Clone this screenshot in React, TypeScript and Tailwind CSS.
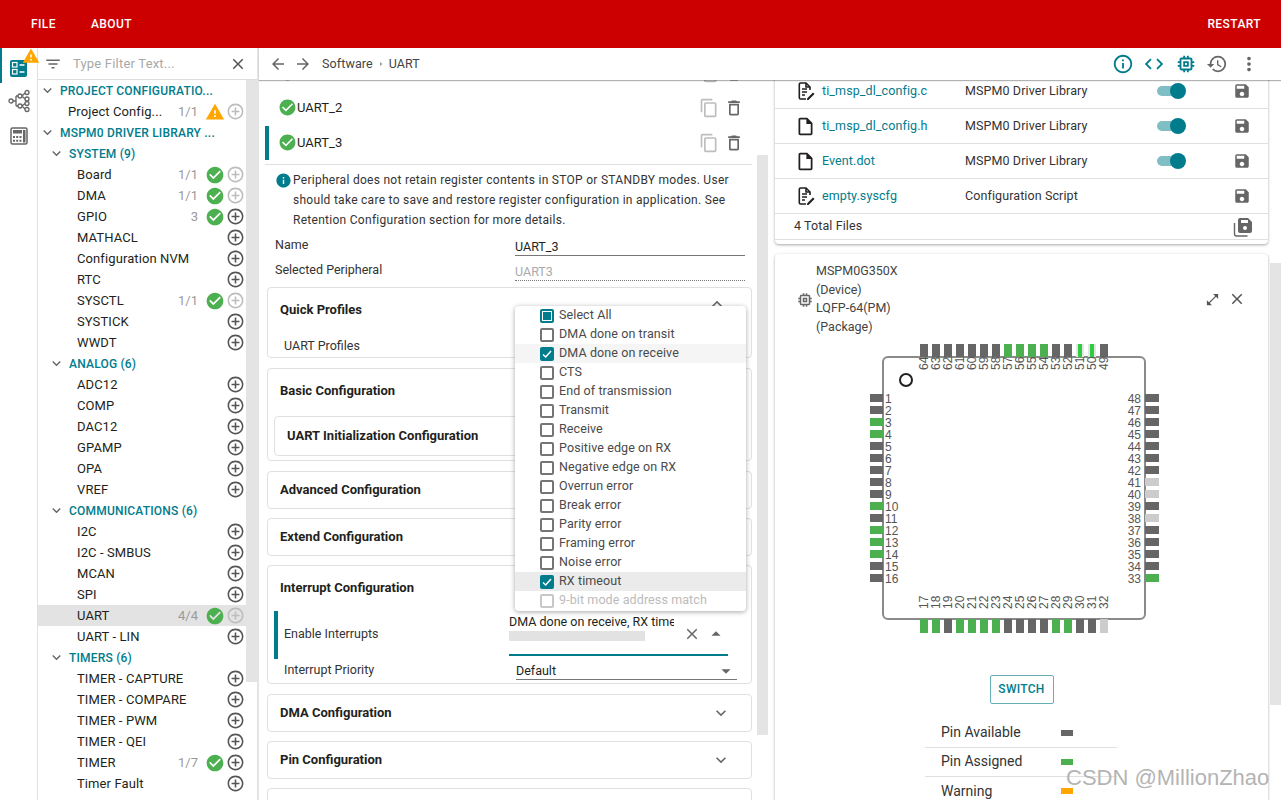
import {
  MdAddCircleOutline,
  MdArrowBack,
  MdArrowForward,
  MdArrowDropDown,
  MdArrowDropUp,
  MdCheckCircle,
  MdClose,
  MdCode,
  MdContentCopy,
  MdDeleteOutline,
  MdExpandLess,
  MdExpandMore,
  MdFilterList,
  MdHistory,
  MdInfo,
  MdInfoOutline,
  MdMemory,
  MdMoreVert,
  MdOpenInFull,
  MdOutlineInsertDriveFile,
  MdSave,
  MdWarning,
} from 'react-icons/md';

const font = { fontFamily: 'Roboto, sans-serif' };

type TreeRow =
  | { kind: 'root'; label: string }
  | { kind: 'group'; label: string }
  | { kind: 'item'; label: string; count?: string; status?: 'ok' | 'warn'; addOff?: boolean; indent?: boolean };

const treeRows: TreeRow[] = [
  { kind: 'root', label: 'PROJECT CONFIGURATIO...' },
  { kind: 'item', label: 'Project Config...', count: '1/1', status: 'warn', addOff: true, indent: true },
  { kind: 'root', label: 'MSPM0 DRIVER LIBRARY ...' },
  { kind: 'group', label: 'SYSTEM (9)' },
  { kind: 'item', label: 'Board', count: '1/1', status: 'ok', addOff: true },
  { kind: 'item', label: 'DMA', count: '1/1', status: 'ok', addOff: true },
  { kind: 'item', label: 'GPIO', count: '3', status: 'ok' },
  { kind: 'item', label: 'MATHACL' },
  { kind: 'item', label: 'Configuration NVM' },
  { kind: 'item', label: 'RTC' },
  { kind: 'item', label: 'SYSCTL', count: '1/1', status: 'ok', addOff: true },
  { kind: 'item', label: 'SYSTICK' },
  { kind: 'item', label: 'WWDT' },
  { kind: 'group', label: 'ANALOG (6)' },
  { kind: 'item', label: 'ADC12' },
  { kind: 'item', label: 'COMP' },
  { kind: 'item', label: 'DAC12' },
  { kind: 'item', label: 'GPAMP' },
  { kind: 'item', label: 'OPA' },
  { kind: 'item', label: 'VREF' },
  { kind: 'group', label: 'COMMUNICATIONS (6)' },
  { kind: 'item', label: 'I2C' },
  { kind: 'item', label: 'I2C - SMBUS' },
  { kind: 'item', label: 'MCAN' },
  { kind: 'item', label: 'SPI' },
  { kind: 'item', label: 'UART', count: '4/4', status: 'ok', addOff: true },
  { kind: 'item', label: 'UART - LIN' },
  { kind: 'group', label: 'TIMERS (6)' },
  { kind: 'item', label: 'TIMER - CAPTURE' },
  { kind: 'item', label: 'TIMER - COMPARE' },
  { kind: 'item', label: 'TIMER - PWM' },
  { kind: 'item', label: 'TIMER - QEI' },
  { kind: 'item', label: 'TIMER', count: '1/7', status: 'ok' },
  { kind: 'item', label: 'Timer Fault' },
];

const interruptOptions = [
  { label: 'Select All', state: 'partial' },
  { label: 'DMA done on transit' },
  { label: 'DMA done on receive', state: 'checked', bg: 'bg-[#f5f5f5]' },
  { label: 'CTS' },
  { label: 'End of transmission' },
  { label: 'Transmit' },
  { label: 'Receive' },
  { label: 'Positive edge on RX' },
  { label: 'Negative edge on RX' },
  { label: 'Overrun error' },
  { label: 'Break error' },
  { label: 'Parity error' },
  { label: 'Framing error' },
  { label: 'Noise error' },
  { label: 'RX timeout', state: 'checked', bg: 'bg-[#ebebeb]' },
  { label: '9-bit mode address match', state: 'disabled' },
];

const files = [
  { name: 'ti_msp_dl_config.c', lib: 'MSPM0 Driver Library', edit: true, toggle: true },
  { name: 'ti_msp_dl_config.h', lib: 'MSPM0 Driver Library', edit: false, toggle: true },
  { name: 'Event.dot', lib: 'MSPM0 Driver Library', edit: false, toggle: true },
  { name: 'empty.syscfg', lib: 'Configuration Script', edit: true, toggle: false },
];

function EditFileIcon() {
  return (
    <svg width="20" height="20" viewBox="0 0 20 20" fill="none" stroke="#231f20" strokeWidth="1.6">
      <path d="M14 9V6l-4-4H4.5A1.2 1.2 0 0 0 3.3 3.2v13.6A1.2 1.2 0 0 0 4.5 18H10" />
      <path d="M10 2v4h4" />
      <path d="M6 8h5M6 11h5M6 14h3" strokeWidth="1.3" />
      <path d="M11 17.5l6-6 1.5 1.5-6 6h-1.5z" fill="#231f20" stroke="none" />
    </svg>
  );
}

function RailListIcon() {
  return (
    <svg width="20" height="20" viewBox="0 0 20 20">
      <rect x="1" y="2" width="17" height="17" rx="2" fill="#007c8c" />
      <rect x="3.5" y="4.5" width="4.5" height="4.5" fill="none" stroke="#fff" strokeWidth="1.2" />
      <rect x="3.5" y="11.5" width="4.5" height="4.5" fill="none" stroke="#fff" strokeWidth="1.2" />
      <path d="M10.5 7h5M10.5 14h5" stroke="#fff" strokeWidth="1.4" />
    </svg>
  );
}

function RailTreeIcon() {
  return (
    <svg width="22" height="24" viewBox="0 0 22 24" fill="none" stroke="#666" strokeWidth="1.3">
      <circle cx="3" cy="12" r="2" />
      <circle cx="12" cy="7" r="2" />
      <circle cx="12" cy="17" r="2" />
      <circle cx="19" cy="3.5" r="2" />
      <circle cx="19" cy="10" r="2" />
      <circle cx="19" cy="14.5" r="2" />
      <circle cx="19" cy="20.5" r="2" />
      <path d="M5 12h3M8 7v10M8 7h2M8 17h2M14 7l3-3M14 7l3 3M14 17l3-2.5M14 17l3 3" />
    </svg>
  );
}

function RailCalcIcon() {
  return (
    <svg width="18" height="18" viewBox="0 0 18 18">
      <rect x="1" y="1" width="16" height="16" rx="1.5" fill="none" stroke="#666" strokeWidth="1.5" />
      <rect x="3" y="3" width="9" height="3.5" fill="#666" />
      <rect x="13" y="3" width="2.5" height="12.5" fill="#666" />
      <path d="M3 9h2v2H3zM6.2 9h2v2h-2zM9.5 9h2v2h-2zM3 12.7h2v2H3zM6.2 12.7h2v2h-2zM9.5 12.7h2v2h-2z" fill="#666" />
    </svg>
  );
}

function SaveStackIcon() {
  return (
    <svg width="20" height="20" viewBox="0 0 20 20" fill="#666">
      <path d="M7 1h8l4 4v9a2 2 0 0 1-2 2H7a2 2 0 0 1-2-2V3a2 2 0 0 1 2-2zm1 2v3h7V3H8zm4 6a2 2 0 1 0 0 4 2 2 0 0 0 0-4z" fill-rule="evenodd" />
      <path d="M1.500 6v11a2 2 0 0 0 2 2h11" fill="none" stroke="#666" strokeWidth="1.4" />
    </svg>
  );
}

function TreeList() {
  return (
    <div className="flex flex-col text-[13px]">
      {treeRows.map((row, i) => {
        if (row.kind === 'root' || row.kind === 'group') {
          return (
            <div
              key={i}
              className={`flex h-[21px] items-center font-medium text-[12px] tracking-[0.2px] text-[#007c8c] whitespace-nowrap ${row.kind === 'root' ? 'pl-[1px]' : 'pl-[10px]'}`}
            >
              <MdExpandMore size={17} className="mr-[1px] text-[#666] shrink-0" />
              <span className="ml-[3px]">{row.label}</span>
            </div>
          );
        }
        const selected = row.label === 'UART';
        return (
          <div
            key={i}
            className={`flex h-[21px] items-center pr-[12px] ${row.indent ? 'pl-[30px]' : 'pl-[39px]'} ${selected ? 'bg-[#e3e3e3]' : ''}`}
          >
            <span className="flex-1 text-[#231f20] whitespace-nowrap tracking-[0.1px]">{row.label}</span>
            {row.count && <span className="text-[#9a9a9a] mr-[7px]">{row.count}</span>}
            {row.status === 'ok' && <MdCheckCircle size={20} className="text-[#4caf50] mr-[1px]" />}
            {row.status === 'warn' && <MdWarning size={20} className="text-[#ffa600] mr-[1px]" />}
            <MdAddCircleOutline size={19} className={row.addOff ? 'text-[#bdbdbd]' : 'text-[#555]'} />
          </div>
        );
      })}
    </div>
  );
}

function Accordion({ title, className = '' }: { title: string; className?: string }) {
  return (
    <div className={`h-[38px] rounded border border-[#e0e0e0] flex items-center justify-between pl-[12px] pr-[20px] ${className}`}>
      <span className="text-[13px] font-bold text-[#231f20]">{title}</span>
      <MdExpandMore size={20} className="text-[#666]" />
    </div>
  );
}

function ConfigRow({ name, active }: { name: string; active?: boolean }) {
  return (
    <div className="h-[35px] flex items-center pl-[6px] pr-[26px] relative">
      <div className={`w-[4px] h-[34px] ${active ? 'bg-[#007c8c]' : ''}`} />
      <MdCheckCircle size={19} className="ml-[9px] text-[#4caf50]" />
      <span className="flex-1 text-[13px] text-[#231f20]">{name}</span>
      <MdContentCopy size={20} className="text-[#bdbdbd]" />
      <MdDeleteOutline size={20} className="ml-[5px] text-[#666]" />
    </div>
  );
}

function Check({ state }: { state?: string }) {
  if (state === 'partial') {
    return (
      <span className="w-[14px] h-[14px] rounded-[2px] border-2 border-[#007c8c] flex items-center justify-center">
        <span className="w-[8px] h-[8px] bg-[#007c8c]" />
      </span>
    );
  }
  if (state === 'checked') {
    return (
      <span className="w-[14px] h-[14px] rounded-[2px] bg-[#007c8c] flex items-center justify-center">
        <svg width="12" height="12" viewBox="0 0 12 12" fill="none" stroke="#fff" strokeWidth="1.5">
          <path d="M2 6.500l2.700 2.500L10 3" />
        </svg>
      </span>
    );
  }
  return (
    <span className={`w-[14px] h-[14px] rounded-[2px] border-2 ${state === 'disabled' ? 'border-[#c8c8c8]' : 'border-[#757575]'}`} />
  );
}

function InterruptMenu() {
  return (
    <div className="absolute left-[256px] top-[226px] w-[231px] bg-white rounded shadow-[0_1px_5px_rgba(0,0,0,0.35)] z-10 pt-[0px] pb-[1px]">
      {interruptOptions.map((o) => (
        <div key={o.label} className={`h-[19px] flex items-center pl-[25px] ${o.bg ?? ''}`}>
          <Check state={o.state} />
          <span className={`ml-[5px] text-[12.500px] tracking-[0.1px] ${o.state === 'disabled' ? 'text-[#bbb]' : 'text-[#4a4a4a]'}`}>{o.label}</span>
        </div>
      ))}
    </div>
  );
}

function MiddlePanel() {
  return (
    <div className="relative w-[511px] h-full overflow-hidden">
      <div className="-mt-[25px] pl-[0px]">
        <ConfigRow name="UART_1" />
        <ConfigRow name="UART_2" />
        <ConfigRow name="UART_3" active />
        <div className="mt-[4px] ml-[6px] mr-[18px] border-t border-[#e0e0e0]" />
        <div className="flex pl-[17px] pr-[20px] pt-[5px] text-[12px] leading-[20px] tracking-[0.28px] text-[#333]">
          <MdInfo size={17} className="text-[#007c8c] shrink-0 mt-[2px] -ml-[1px]" />
          <p className="ml-[1px]">
            Peripheral does not retain register contents in STOP or STANDBY modes. User should take care to save and restore register configuration in application. See Retention Configuration section for more details.
          </p>
        </div>
        <div className="flex items-center h-[20px] mt-[5px] pl-[16px] text-[12.500px] text-[#333]">
          <span className="w-[240px]">Name</span>
          <span className="w-[230px] border-b border-[#777] text-[#231f20] leading-[17px] mt-[3px]">UART_3</span>
        </div>
        <div className="flex items-center h-[20px] mt-[5px] pl-[16px] text-[12.500px] text-[#333]">
          <span className="w-[240px]">Selected Peripheral</span>
          <span className="w-[230px] border-b border-dotted border-[#777] text-[#aaa] leading-[17px] mt-[3px]">UART3</span>
        </div>

        <div className="flex flex-col ml-[8px] mr-[18px] mt-[7px]">
          <div className="h-[71px] rounded border border-[#e0e0e0] pl-[12px] pt-[12px] text-[13px]">
            <div className="font-bold text-[#231f20]">Quick Profiles</div>
            <div className="mt-[17px] pl-[4px] text-[12.500px] text-[#333]">UART Profiles</div>
          </div>
          <div className="h-[93px] mt-[10px] rounded border border-[#e0e0e0] pt-[12px] px-[6px]">
            <div className="pl-[6px] text-[13px] font-bold text-[#231f20]">Basic Configuration</div>
            <div className="h-[40px] mt-[15px] rounded border border-[#e0e0e0] flex items-center pl-[12px] text-[13px] font-bold text-[#231f20]">
              UART Initialization Configuration
            </div>
          </div>
          <Accordion title="Advanced Configuration" className="mt-[10px]" />
          <Accordion title="Extend Configuration" className="mt-[9px]" />
          <div className="h-[119px] mt-[9px] rounded border border-[#e0e0e0] pt-[12px]">
            <div className="pl-[12px] text-[13px] font-bold text-[#231f20]">Interrupt Configuration</div>
            <div className="mt-[13px] ml-[6px] h-[48px] border-l-4 border-[#007c8c] flex text-[12.500px] text-[#333]">
              <span className="w-[231px] pl-[6px] self-center">Enable Interrupts</span>
              <div className="relative w-[219px] h-[45px] border-b-2 border-[#007c8c]">
                <div className="w-[165px] overflow-hidden whitespace-nowrap leading-[19px] text-[#231f20] mt-[1px]">DMA done on receive, RX timeout</div>
                <div className="w-[136px] h-[10px] bg-[#e2e2e2]" />
                <MdClose size={18} className="absolute right-[27px] top-[14px] text-[#666]" />
                <MdArrowDropUp size={22} className="absolute right-[1px] top-[12px] text-[#666]" />
              </div>
            </div>
            <div className="flex items-center h-[20px] mt-[2px] text-[12.500px] text-[#333]">
              <span className="w-[248px] pl-[16px]">Interrupt Priority</span>
              <div className="relative w-[221px] border-b border-[#777] leading-[17px] text-[#231f20]">
                Default
                <MdArrowDropDown size={22} className="absolute right-[0px] -top-[2px] text-[#666]" />
              </div>
            </div>
          </div>
          <Accordion title="DMA Configuration" className="mt-[10px]" />
          <Accordion title="Pin Configuration" className="mt-[9px]" />
          <div className="h-[38px] mt-[9px] rounded border border-[#e0e0e0]" />
        </div>
      </div>
      <MdExpandLess size={20} className="absolute left-[448px] top-[214px] text-[#666]" />
      <InterruptMenu />
      <div className="absolute left-[498px] top-[75px] w-[11px] h-[580px] bg-[#e4e4e4]" />
    </div>
  );
}

type PinColor = 'g' | 'a' | 'l' | 'b';
const pinFill: Record<PinColor, string> = { g: '#666666', a: '#4caf50', l: '#cccccc', b: '#2ecc40' };

const leftPins: PinColor[] = ['g', 'g', 'a', 'a', 'g', 'g', 'g', 'g', 'g', 'a', 'g', 'a', 'a', 'a', 'g', 'g'];
const bottomPins: PinColor[] = ['a', 'a', 'g', 'a', 'a', 'a', 'a', 'g', 'g', 'g', 'g', 'a', 'a', 'g', 'g', 'l'];
const rightPins: PinColor[] = ['g', 'g', 'g', 'g', 'g', 'g', 'g', 'l', 'l', 'g', 'l', 'g', 'g', 'g', 'g', 'a'];
const topPins: PinColor[] = ['g', 'g', 'g', 'g', 'g', 'g', 'g', 'a', 'a', 'a', 'a', 'g', 'g', 'b', 'b', 'g'];

// chip drawing, offsets are relative to svg origin at page (866, 342)
function ChipDiagram() {
  const xs = Array.from({ length: 16 }, (_, i) => i);
  return (
    <svg width="298" height="296" viewBox="0 0 298 296" className="block" style={{ fontFamily: '"Liberation Sans", sans-serif' }}>
      <rect x="17" y="16" width="262" height="262" rx="5" fill="#fff" stroke="#8a8a8a" strokeWidth="2" />
      <circle cx="40" cy="39" r="6" fill="none" stroke="#231f20" strokeWidth="2" />
      {xs.map((i) => (
        <g key={i} fill="#555" fontSize="12">
          <rect x="4" y={53 + i * 12} width="13" height="8" fill={pinFill[leftPins[i]]} />
          <text x="19" y={61.5 + i * 12}>{i + 1}</text>
          <rect x={54 + i * 12} y="278" width="8" height="14" fill={pinFill[bottomPins[i]]} />
          <text transform={`translate(${62 + i * 12} 268) rotate(-90)`}>{i + 17}</text>
          <rect x="279" y={53 + i * 12} width="14" height="8" fill={pinFill[rightPins[i]]} />
          <text x="275" y={61.500 + i * 12} textAnchor="end">{48 - i}</text>
          {topPins[i] === 'b' ? (
            <>
              <rect x={54 + i * 12} y="3" width="8" height="13" fill="#e5e5e5" />
              <rect x={56 + i * 12} y="3" width="4" height="13" fill={pinFill.b} />
            </>
          ) : (
            <rect x={54 + i * 12} y="3" width="8" height="13" fill={pinFill[topPins[i]]} />
          )}
          <text transform={`translate(${62 + i * 12} 29) rotate(-90)`}>{64 - i}</text>
        </g>
      ))}
    </svg>
  );
}

function RightPanel() {
  return (
    <div className="relative flex-1 h-full overflow-hidden pl-[5px] pr-[13px]">
      <div className="-mt-[6px] rounded-b shadow-[0_1px_3px_rgba(0,0,0,0.35)] pb-[4px]">
        {files.map((f) => (
          <div key={f.name} className="h-[35px] flex items-center border-b border-[#e0e0e0] pl-[21px] text-[12.500px]">
            <span className="w-[26px] flex">
              {f.edit ? <EditFileIcon /> : <MdOutlineInsertDriveFile size={21} className="text-[#231f20] -ml-[1px]" />}
            </span>
            <span className="w-[143px] text-[#007c8c] tracking-[0.1px]">{f.name}</span>
            <span className="w-[192px] text-[#333] tracking-[0.1px]">{f.lib}</span>
            <span className="w-[76px]">
              {f.toggle && (
                <span className="block relative w-[28px] h-[10px] rounded-full bg-[#80bec6]">
                  <span className="absolute -right-[1px] -top-[3px] w-[16px] h-[16px] rounded-full bg-[#007c8c]" />
                </span>
              )}
            </span>
            <MdSave size={18} className="text-[#666]" />
          </div>
        ))}
        <div className="h-[26px] flex items-center justify-between border-b border-[#e0e0e0] pl-[19px] pr-[15px] text-[12.500px] text-[#333]">
          <span className="tracking-[0.1px]">4 Total Files</span>
          <SaveStackIcon />
        </div>
      </div>

      <div className="mt-[10px] h-[600px] rounded shadow-[0_1px_3px_rgba(0,0,0,0.35)]">
        <div className="relative pl-[41px] pt-[8px] text-[12.500px] leading-[18.700px] text-[#444]">
          <MdMemory size={18} className="absolute left-[21px] top-[37px] text-[#666]" />
          <div>MSPM0G350X</div>
          <div>(Device)</div>
          <div>LQFP-64(PM)</div>
          <div>(Package)</div>
          <MdOpenInFull size={15} className="absolute left-[430px] top-[38px] text-[#555]" />
          <MdClose size={18} className="absolute left={0} left-[453px] top-[36px] text-[#555]" />
        </div>
        <div className="ml-[91px] mt-[4px]">
          <ChipDiagram />
        </div>
        <div className="flex justify-center mt-[38px]">
          <span className="w-[64px] h-[29px] rounded-[2px] border border-[#66b0ba] text-[#007c8c] text-[12px] font-medium tracking-[0.3px] flex items-center justify-center ml-[0px]">SWITCH</span>
        </div>
        <div className="ml-[150px] w-[192px] mt-[15px] text-[14px] text-[#333]">
          <div className="h-[29px] flex items-center border-b border-[#e0e0e0] pl-[16px]">
            <span className="w-[120px]">Pin Available</span>
            <span className="w-[12px] h-[6px] bg-[#666]" />
          </div>
          <div className="h-[29px] flex items-center border-b border-[#e0e0e0] pl-[16px]">
            <span className="w-[120px]">Pin Assigned</span>
            <span className="w-[12px] h-[6px] bg-[#4caf50]" />
          </div>
          <div className="h-[29px] flex items-center pl-[16px]">
            <span className="w-[120px]">Warning</span>
            <span className="w-[12px] h-[6px] bg-[#ffa600]" />
          </div>
        </div>
      </div>
      <div className="absolute right-0 top-[183px] w-[11px] h-[442px] bg-[#e4e4e4]" />
    </div>
  );
}

export default function App() {
  return (
    <div className="relative w-[1281px] h-[800px] overflow-hidden bg-white flex flex-col" style={font}>
      <header className="h-[48px] shrink-0 bg-[#cc0000] flex items-center text-white text-[12px] font-medium tracking-[0.4px]">
        <span className="ml-[31px]">FILE</span>
        <span className="ml-[35px]">ABOUT</span>
        <span className="ml-auto mr-[20px]">RESTART</span>
      </header>

      <div className="flex flex-1 min-h-0">
        {/* left rail */}
        <nav className="relative w-[38px] shrink-0 border-r border-[#e0e0e0] flex flex-col items-center">
          <div className="absolute left-0 top-0 w-[2px] h-[35px] bg-[#007c8c]" />
          <div className="h-[35px] flex items-center justify-center ml-[1px] pt-[4px]"><RailListIcon /></div>
          <MdWarning size={18} className="absolute left-[22px] -top-[1px] text-[#ffa600]" />
          <div className="h-[35px] flex items-center justify-center"><RailTreeIcon /></div>
          <div className="h-[35px] flex items-center justify-center"><RailCalcIcon /></div>
        </nav>

        {/* module tree */}
        <aside className="relative w-[221px] shrink-0 border-r-2 border-[#e4e4e4] flex flex-col">
          <div className="h-[32px] shrink-0 flex items-center pl-[6px] pr-[10px] border-b border-[#ddd]">
            <MdFilterList size={18} className="text-[#666]" />
            <span className="ml-[11px] flex-1 text-[13px] tracking-[0.2px] text-[#a8a8a8]">Type Filter Text...</span>
            <MdClose size={18} className="text-[#555]" />
          </div>
          <div className="relative flex-1 overflow-hidden">
            <TreeList />
            <div className="absolute right-0 top-0 w-[11px] h-[602px] bg-[#e4e4e4]" />
          </div>
        </aside>

        {/* main content */}
        <main className="flex-1 min-w-0 flex flex-col">
          <div className="relative z-20 h-[32px] shrink-0 bg-white flex items-center pl-[10px] pr-[21px] shadow-[0_1px_1px_rgba(0,0,0,0.3)]">
            <MdArrowBack size={18} className="text-[#666]" />
            <MdArrowForward size={18} className="ml-[7px] text-[#666]" />
            <span className="ml-[10px] text-[12.500px] text-[#444] tracking-[0.1px]">Software</span>
            <MdArrowDropDown size={10} className="mx-[3px] -rotate-90 text-[#888]" />
            <span className="text-[12.500px] text-[#444] tracking-[0.1px]">UART</span>
            <MdInfoOutline size={22} className="ml-auto text-[#007c8c]" />
            <MdCode size={22} className="ml-[9px] text-[#007c8c]" />
            <MdMemory size={22} className="ml-[10px] text-[#007c8c]" />
            <MdHistory size={22} className="ml-[9px] text-[#666]" />
            <MdMoreVert size={22} className="ml-[10px] text-[#666]" />
          </div>
          <div className="flex flex-1 min-h-0">
            <MiddlePanel />
            <RightPanel />
          </div>
        </main>
      </div>

      <div className="absolute left-[1066px] top-[764px] text-[22px] leading-[28px] text-[#b4b4b4] whitespace-nowrap" style={{ fontFamily: '"Liberation Sans", sans-serif' }}>
        CSDN @MillionZhao
      </div>
    </div>
  );
}
